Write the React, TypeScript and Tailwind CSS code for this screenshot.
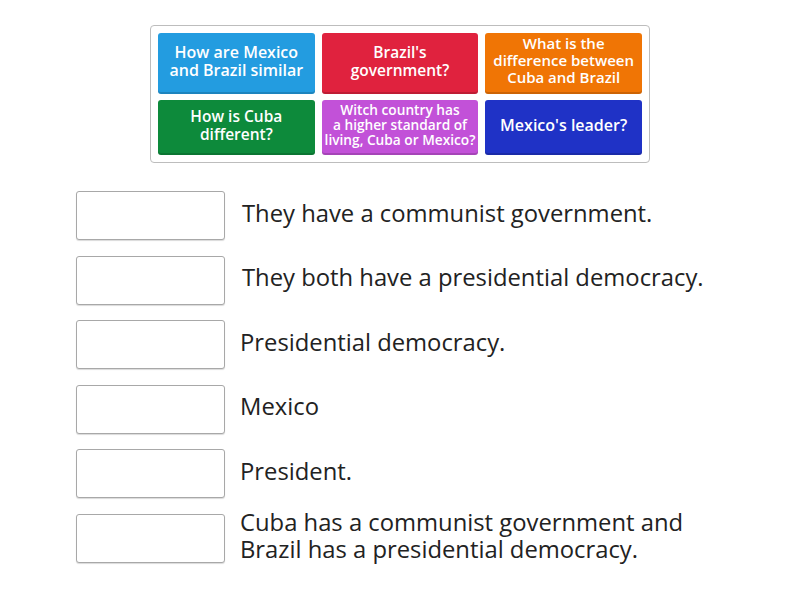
const tiles = [
  { lines: ["How are Mexico", "and Brazil similar"], bg: "bg-[#239ce0]", size: "text-[16px] leading-[18px]" },
  { lines: ["Brazil's", "government?"], bg: "bg-[#e0223e]", size: "text-[15.5px] leading-[18px]" },
  { lines: ["What is the", "difference between", "Cuba and Brazil"], bg: "bg-[#f07505]", size: "text-[15px] leading-[17px]" },
  { lines: ["How is Cuba", "different?"], bg: "bg-[#0d8a3b]", size: "text-[15.5px] leading-[18px]" },
  { lines: ["Witch country has", "a higher standard of", "living, Cuba or Mexico?"], bg: "bg-[#c251d8]", size: "text-[13.7px] leading-[15px]" },
  { lines: ["Mexico's leader?"], bg: "bg-[#1f32c6]", size: "text-[16px] leading-[18px]" },
];

const answers = [
  { text: "They have a communist government.", pad: "pl-[17px]" },
  { text: "They both have a presidential democracy.", pad: "pl-[17px]" },
  { text: "Presidential democracy.", pad: "pl-[15px]" },
  { text: "Mexico", pad: "pl-[15px]" },
  { text: "President.", pad: "pl-[15px]" },
  { text: "Cuba has a communist government and Brazil has a presidential democracy.", pad: "pl-[15px]" },
];

export default function App() {
  return (
    <div className="w-[800px] h-[600px] bg-white font-['Open_Sans',sans-serif]">
      <div className="pt-[25px] pl-[150px]">
        <div className="w-[500px] h-[138px] border border-[#bdbdbd] rounded-[4px] p-[7px] grid grid-cols-3 gap-x-[7px] gap-y-[6px]">
          {tiles.map((t) => (
            <div
              key={t.lines.join(" ")}
              className={`${t.bg} rounded-[3px] pb-[6px] flex flex-col items-center justify-center text-center text-white font-semibold whitespace-nowrap shadow-[inset_0_-2px_0_rgba(0,0,0,0.15)] ${t.size}`}
            >
              {t.lines.map((l) => (
                <span key={l}>{l}</span>
              ))}
            </div>
          ))}
        </div>
      </div>
      <div className="pt-[28px] pl-[76px] flex flex-col gap-[15.5px]">
        {answers.map((a) => (
          <div key={a.text} className="flex items-center h-[49px]">
            <div className="w-[149px] h-[49px] shrink-0 border border-[#a8a8a8] rounded-[3px] bg-white shadow-[0_1px_1px_rgba(0,0,0,0.15)]" />
            <div className={`${a.pad} w-[480px] pb-[5px] text-[23.8px] leading-[27px] text-[#222]`}>{a.text}</div>
          </div>
        ))}
      </div>
    </div>
  );
}
